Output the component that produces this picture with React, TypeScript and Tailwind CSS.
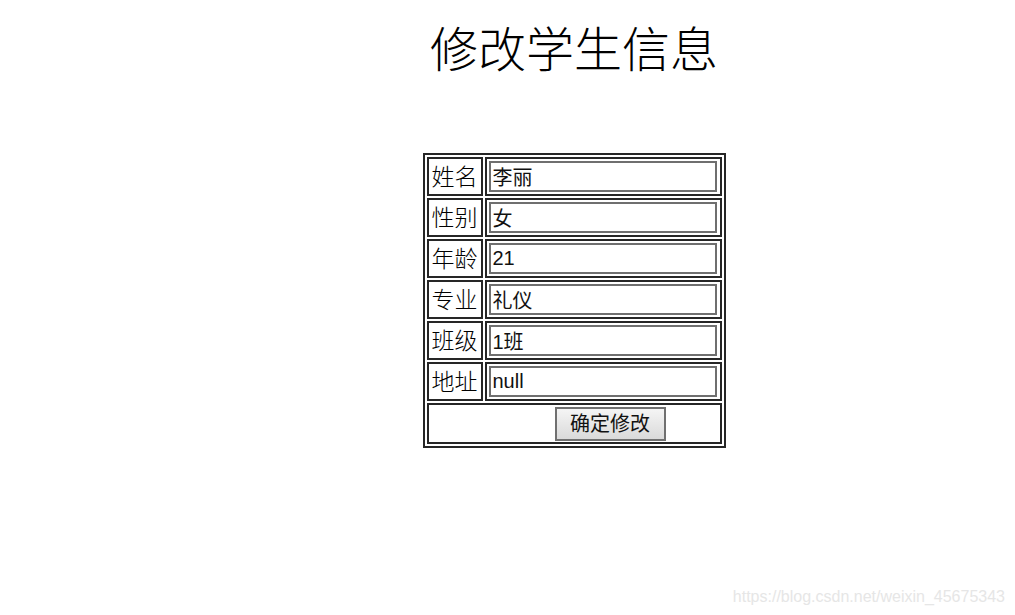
import React from "react";

const rows: [string, string][] = [
  ["姓名", "李丽"],
  ["性别", "女"],
  ["年龄", "21"],
  ["专业", "礼仪"],
  ["班级", "1班"],
  ["地址", "null"],
];

const cjk = { fontFamily: '"Noto Sans CJK SC", "Noto Sans", sans-serif' };
const sans = { fontFamily: '"Liberation Sans", "Noto Sans CJK SC", Arial, sans-serif' };

export default function App() {
  return (
    <div className="relative w-full h-[615px] overflow-hidden bg-white text-black">
      <div className="w-[1148px] flex flex-col items-center">
        <h1
          className="mt-[17px] text-[48px] leading-[58px] font-light"
          style={cjk}
        >
          修改学生信息
        </h1>
        <table className="mt-[78px] border-2 border-[#262626] border-separate border-spacing-[2px]">
          <tbody>
            {rows.map(([label, value]) => (
              <tr key={label}>
                <td className="border-2 border-[#262626] h-[39px] w-[56px] px-[2px] pt-0 pb-[4px] text-[23px] leading-[30px] font-light text-center whitespace-nowrap" style={cjk}>
                  {label}
                </td>
                <td className="border-2 border-[#262626] h-[39px] w-[237px] p-[2px]">
                  <input
                    readOnly
                    value={value}
                    className="block w-[228px] h-[31px] border-2 border-[#6f6f6f] px-[2px] text-[20px] leading-[27px] text-[#111] outline-none"
                    style={sans}
                  />
                </td>
              </tr>
            ))}
            <tr>
              <td colSpan={2} className="border-2 border-[#262626] h-[41px] py-0 pl-[126px] text-left">
                <button
                  className="w-[111px] h-[34px] border-2 border-[#707070] bg-gradient-to-b from-[#f5f5f5] to-[#dadada] text-[20px] leading-[28px] text-[#111]"
                  style={sans}
                >
                  确定修改
                </button>
              </td>
            </tr>
          </tbody>
        </table>
      </div>
      <div
        className="absolute right-[10px] bottom-[8px] text-[16px] leading-[20px] text-[#e6e6e6]"
        style={sans}
      >
        https://blog.csdn.net/weixin_45675343
      </div>
    </div>
  );
}
